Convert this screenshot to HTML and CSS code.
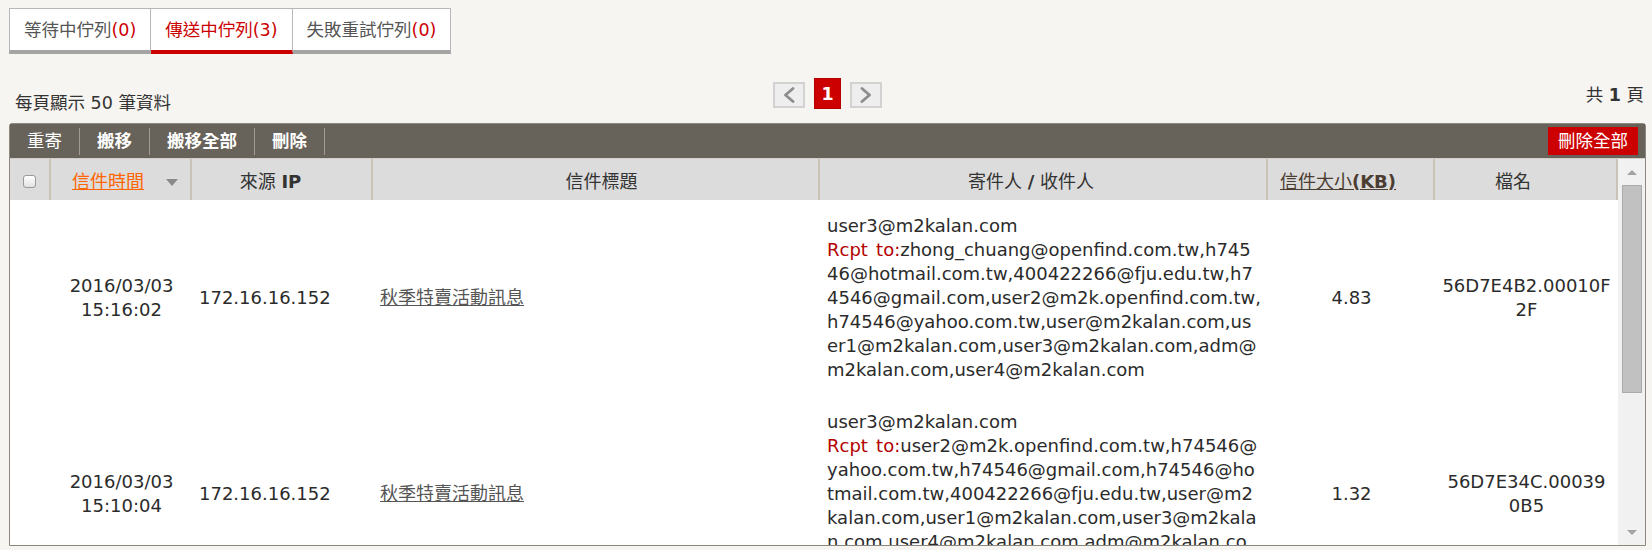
FILE: index.html
```html
<!DOCTYPE html>
<html lang="zh-Hant">
<head>
  <meta charset="UTF-8">
  <meta name="viewport" content="width=device-width, initial-scale=1.0">
  <title>郵件佇列</title>
  <link rel="stylesheet" href="styles.css">
</head>
<body>
  <div class="tabs">
    <a class="tab" href="#">等待中佇列<span class="count">(0)</span></a>
    <a class="tab active" href="#">傳送中佇列<span class="count">(3)</span></a>
    <a class="tab" href="#">失敗重試佇列<span class="count">(0)</span></a>
  </div>

  <div class="pager-bar">
    <div class="per-page">每頁顯示 50 筆資料</div>
    <div class="pager">
      <span class="pg-btn">
        <svg width="12" height="16" viewBox="0 0 12 16"><polyline points="10,1.5 2.5,8 10,14.5" fill="none" stroke="#8d8d8d" stroke-width="2.8" stroke-linejoin="round" stroke-linecap="round"/></svg>
      </span>
      <span class="pg-cur">1</span>
      <span class="pg-btn">
        <svg width="12" height="16" viewBox="0 0 12 16"><polyline points="2,1.5 9.5,8 2,14.5" fill="none" stroke="#8d8d8d" stroke-width="2.8" stroke-linejoin="round" stroke-linecap="round"/></svg>
      </span>
    </div>
    <div class="total">共 <b>1</b> 頁</div>
  </div>

  <div class="panel">
    <div class="toolbar">
      <span class="tool plain">重寄</span>
      <span class="tool">搬移</span>
      <span class="tool">搬移全部</span>
      <span class="tool">刪除</span>
      <span class="tool-danger">刪除全部</span>
    </div>
    <div class="grid-wrap">
      <div class="grid">
        <table>
          <colgroup>
            <col style="width:41px">
            <col style="width:141px">
            <col style="width:181px">
            <col style="width:447px">
            <col style="width:448px">
            <col style="width:167px">
            <col style="width:183px">
          </colgroup>
          <thead>
            <tr>
              <th><span class="check"></span></th>
              <th class="h-time"><a class="sort-link" href="#">信件時間</a><span class="sort-arrow"></span></th>
              <th class="h-ip">來源 <b>IP</b></th>
              <th class="h-subj">信件標題</th>
              <th class="h-addr">寄件人 <b>/</b> 收件人</th>
              <th class="h-size"><a class="size-link" href="#">信件大小<b>(KB)</b></a></th>
              <th class="h-file">檔名</th>
            </tr>
          </thead>
          <tbody>
            <tr>
              <td></td>
              <td class="c-time">2016/03/03 15:16:02</td>
              <td class="c-ip">172.16.16.152</td>
              <td class="c-subj"><a href="#">秋季特賣活動訊息</a></td>
              <td class="c-addr">user3@m2kalan.com<br><span class="rcpt">Rcpt to:</span>zhong_chuang@openfind.com.tw,h74546@hotmail.com.tw,400422266@fju.edu.tw,h74546@gmail.com,user2@m2k.openfind.com.tw,h74546@yahoo.com.tw,user@m2kalan.com,user1@m2kalan.com,user3@m2kalan.com,adm@m2kalan.com,user4@m2kalan.com</td>
              <td class="c-size">4.83</td>
              <td class="c-file">56D7E4B2.00010F2F</td>
            </tr>
            <tr>
              <td></td>
              <td class="c-time">2016/03/03 15:10:04</td>
              <td class="c-ip">172.16.16.152</td>
              <td class="c-subj"><a href="#">秋季特賣活動訊息</a></td>
              <td class="c-addr">user3@m2kalan.com<br><span class="rcpt">Rcpt to:</span>user2@m2k.openfind.com.tw,h74546@yahoo.com.tw,h74546@gmail.com,h74546@hotmail.com.tw,400422266@fju.edu.tw,user@m2kalan.com,user1@m2kalan.com,user3@m2kalan.com,user4@m2kalan.com,adm@m2kalan.com</td>
              <td class="c-size">1.32</td>
              <td class="c-file">56D7E34C.000390B5</td>
            </tr>
            <tr>
              <td></td>
              <td class="c-time">2016/03/03 15:02:47</td>
              <td class="c-ip">172.16.16.152</td>
              <td class="c-subj"><a href="#">秋季特賣活動訊息</a></td>
              <td class="c-addr">user3@m2kalan.com<br><span class="rcpt">Rcpt to:</span>user4@m2kalan.com,adm@m2kalan.com</td>
              <td class="c-size">2.15</td>
              <td class="c-file">56D7E0F1.0002A1C3</td>
            </tr>
          </tbody>
        </table>
      </div>
      <div class="scrollbar">
        <span class="sb-arrow up"></span>
        <span class="sb-thumb"></span>
        <span class="sb-track"></span>
        <span class="sb-arrow down"></span>
      </div>
    </div>
  </div>
</body>
</html>
```

FILE: styles.css
```css
html, body {
  margin: 0;
  height: 100%;
  overflow: hidden;
}

body {
  box-sizing: border-box;
  padding: 8px 6px 0 9px;
  background-color: #f6f5f1;
  color: #333;
  font-family: "DejaVu Sans", "Noto Sans CJK TC", sans-serif;
  font-size: 17.5px;
}

/* Tabs */
.tabs {
  display: flex;
}

.tab {
  display: block;
  padding: 2px 14px 0;
  line-height: 39px;
  color: #555;
  background: #fff;
  border: 1px solid #b7b7b7;
  border-bottom: 4px solid #a4a4a4;
  text-decoration: none;
}

.tab + .tab {
  border-left: none;
}

.tab .count {
  color: #cc0000;
}

.tab.active {
  color: #cc0000;
  border-bottom-color: #cc0000;
}

/* Pager row */
.pager-bar {
  display: grid;
  grid-template-columns: 1fr auto 1fr;
  align-items: start;
  height: 45px;
  padding-top: 24px;
}

.per-page {
  margin: 13px 0 0 6px;
  line-height: 24px;
}

.pager {
  display: flex;
  align-items: center;
  gap: 9px;
}

.pg-btn {
  display: flex;
  align-items: center;
  justify-content: center;
  width: 28px;
  height: 22px;
  margin-top: 2px;
  background: #eee;
  border: 2px solid #d2d2d2;
}

.pg-cur {
  display: flex;
  align-items: center;
  justify-content: center;
  width: 25px;
  height: 29px;
  background: #cc0000;
  border: 1px solid #b30000;
  color: #fff;
  font-weight: bold;
}

.total {
  justify-self: end;
  margin: 5px 2px 0 0;
  line-height: 24px;
}

/* Panel */
.panel {
  background: #fff;
  border: 1px solid #8c8880;
  border-radius: 3px 3px 0 0;
}

.toolbar {
  display: flex;
  align-items: center;
  height: 34px;
  background: #67625a;
  border-bottom: 1px solid #d3cec7;
  color: #fff;
}

.tool {
  padding: 0 17px;
  line-height: 27px;
  border-right: 1px solid #a19b92;
  font-weight: bold;
}

.tool.plain {
  font-weight: normal;
}

.tool-danger {
  margin: 0 7px 0 auto;
  padding: 0 10px;
  line-height: 28px;
  background: #cc0000;
}

.grid-wrap {
  display: flex;
  height: 386px;
}

.grid {
  flex: 1;
  overflow: hidden;
}

table {
  table-layout: fixed;
  width: 1608px;
  border-collapse: separate;
  border-spacing: 0;
}

th {
  box-sizing: border-box;
  height: 41px;
  padding: 0;
  background: #dcdcdc;
  border-right: 2px solid #cbc2b6;
  color: #333;
  font-size: 18px;
  font-weight: normal;
  text-align: center;
}

th b {
  font-weight: bold;
}

.check {
  display: inline-block;
  width: 11px;
  height: 11px;
  border: 1px solid #999;
  border-radius: 3px;
  background: linear-gradient(#fff, #e2e2e2);
  vertical-align: middle;
}

.h-time {
  text-align: left;
  padding-left: 21px;
}

.sort-link {
  color: #ff6600;
}

.sort-arrow {
  display: inline-block;
  width: 0;
  height: 0;
  margin-left: 22px;
  border-left: 6.5px solid transparent;
  border-right: 6.5px solid transparent;
  border-top: 7px solid #8a8a8a;
  vertical-align: middle;
}

.h-ip { padding-right: 22px; }
.h-subj { padding-left: 12px; }
.h-addr { padding-right: 24px; }
.h-size { padding-right: 25px; }
.h-file { padding-right: 25px; }

.size-link {
  color: #4b3d31;
}

td {
  padding: 14px 8px;
  vertical-align: middle;
  color: #2b2b2b;
  font-size: 18px;
  line-height: 24px;
}

.c-time {
  text-align: center;
}

.c-ip {
  padding-left: 7px;
}

.c-subj {
  padding-left: 7px;
}

.c-subj a {
  color: #555;
}

.c-addr {
  padding: 14px 6.5px 14px 7px;
  word-break: break-all;
  word-spacing: 2.5px;
}

.rcpt {
  color: #b30000;
}

.c-size {
  text-align: center;
}

.c-file {
  padding: 14px 7px;
  text-align: center;
  word-break: break-all;
}

/* Scrollbar */
.scrollbar {
  display: flex;
  flex-direction: column;
  align-items: center;
  width: 27px;
  background: #f1f1f1;
}

.sb-arrow {
  display: flex;
  align-items: center;
  justify-content: center;
  width: 100%;
  height: 26px;
}

.sb-arrow::before {
  content: "";
  border-left: 5px solid transparent;
  border-right: 5px solid transparent;
}

.sb-arrow.up::before {
  border-bottom: 5px solid #a3a3a3;
}

.sb-arrow.down {
  height: 25px;
}

.sb-arrow.down::before {
  border-top: 5px solid #a3a3a3;
}

.sb-thumb {
  width: 18px;
  height: 206px;
  background: #c1c1c1;
  border: 1px solid #aaa;
}

.sb-track {
  flex: 1;
}
```
